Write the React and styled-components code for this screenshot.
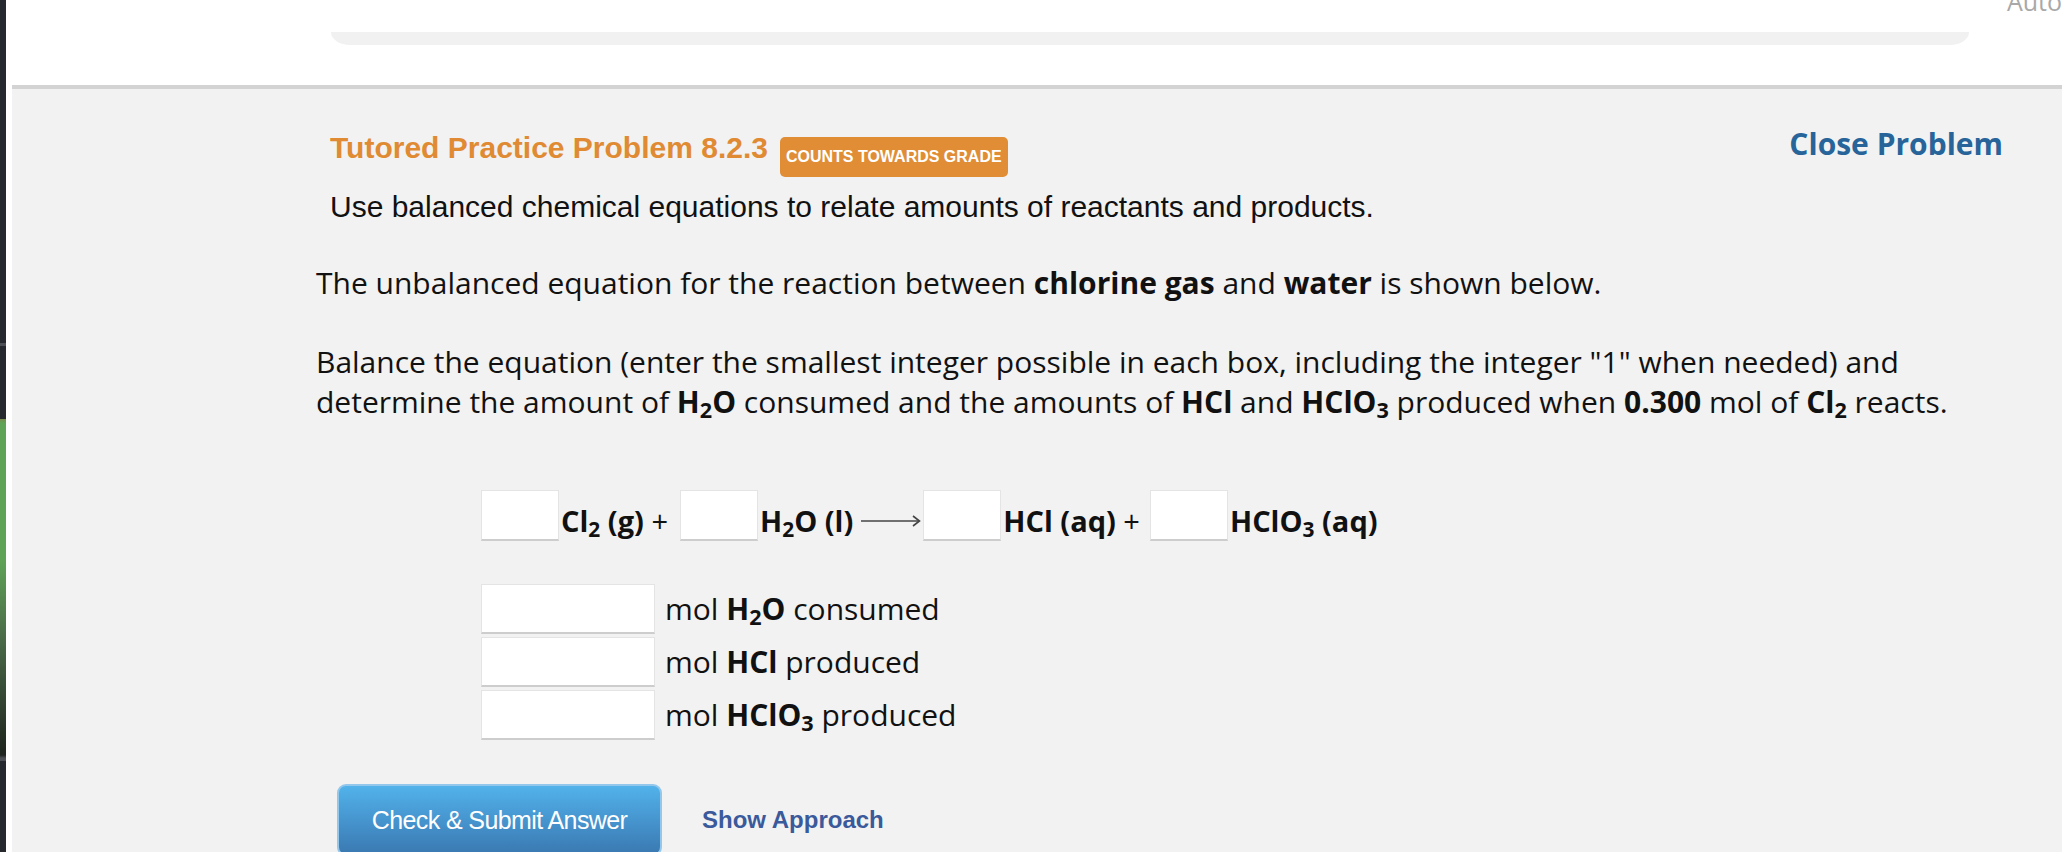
import React from "react";
import styled, { createGlobalStyle } from "styled-components";

const Global = createGlobalStyle`
  html, body { margin: 0; padding: 0; background: #ffffff; }
  body { font-family: "Open Sans", "Liberation Sans", sans-serif; color: #111; }
  * { box-sizing: border-box; }
`;

const Page = styled.div`
  display: flex;
  height: 852px;
  overflow: hidden;
`;

const SideStrip = styled.div`
  width: 6px;
  flex: none;
  background: linear-gradient(
    to bottom,
    #25282d 0px,
    #25282d 343px,
    #4c4f54 343px,
    #4c4f54 346px,
    #25282d 346px,
    #25282d 419px,
    #7a8a4a 419px,
    #5ea356 423px,
    #5fa357 560px,
    #4a6a48 640px,
    #1e241e 755px,
    #4c4f54 758px,
    #4c4f54 761px,
    #25282d 761px,
    #25282d 852px
  );
`;

const Main = styled.div`
  flex: 1;
  display: flex;
  flex-direction: column;
  background: #ffffff;
  min-width: 0;
`;

const TopBar = styled.div`
  height: 85px;
  display: flex;
  align-items: flex-start;
  flex: none;
`;

const Tab = styled.div`
  margin-left: 325px;
  margin-top: 32px;
  width: 1653px;
  height: 13px;
  background: #f1f1f1;
  border-radius: 0 0 19px 19px / 0 0 13px 13px;
`;

const AutoLabel = styled.span`
  margin-left: 38px;
  margin-top: -11px;
  font-family: "Open Sans", sans-serif;
  font-size: 25px;
  line-height: 24px;
  color: #a8a8a8;
  white-space: nowrap;
`;

const Divider = styled.div`
  height: 4px;
  flex: none;
  background: #d3d3d3;
  margin-left: 6px;
`;

const Panel = styled.div`
  flex: 1;
  margin-left: 6px;
  background: #f2f2f2;
  padding-top: 39px;
`;

const Header = styled.div`
  padding-left: 318px;
  padding-right: 59px;
`;

const TitleRow = styled.div`
  display: flex;
  align-items: flex-start;
`;

const Title = styled.h1`
  margin: 0;
  font-family: "Liberation Sans", Arial, sans-serif;
  font-weight: 700;
  font-size: 30px;
  line-height: 40px;
  color: #e08a33;
`;

const Badge = styled.span`
  margin-left: 12px;
  margin-top: 9px;
  height: 40px;
  padding: 0 6px;
  display: inline-flex;
  align-items: center;
  background: #e08d36;
  border-radius: 5px;
  color: #ffffff;
  font-family: "Liberation Sans", Arial, sans-serif;
  font-weight: 700;
  font-size: 16px;
`;

const CloseLink = styled.a`
  margin-left: auto;
  margin-top: -4px;
  font-family: "Open Sans", sans-serif;
  font-weight: 700;
  font-size: 30px;
  line-height: 40px;
  color: #27649a;
  text-decoration: none;
  cursor: pointer;
`;

const Subtitle = styled.p`
  margin: 10px 0 0;
  font-family: "Liberation Sans", Arial, sans-serif;
  font-size: 30px;
  line-height: 40px;
  color: #111;
`;

const Body = styled.div`
  padding-left: 304px;
  font-family: "Open Sans", sans-serif;
  font-size: 30px;
  line-height: 40px;
  color: #111;
`;

const Para = styled.p`
  margin: ${(p) => p.$top}px 0 0;
`;

const Sub = styled.sub`
  font-size: 0.72em;
  line-height: 0;
  vertical-align: -0.22em;
`;

const EquationRow = styled.div`
  margin: 68px 0 0 165px;
  display: flex;
  align-items: flex-end;
  font-size: 29px;
`;

const Box = styled.div`
  width: ${(p) => p.$w}px;
  height: ${(p) => p.$h}px;
  flex: none;
  background: #ffffff;
  border: 1px solid #e4e4e4;
  border-bottom: 2px solid #cdcdcd;
`;

const Term = styled.span`
  margin: 0 ${(p) => p.$after}px 0 2px;
  white-space: nowrap;
  font-weight: 700;
`;

const Plus = styled.span`
  font-weight: 400;
`;

const Arrow = styled.svg`
  margin: 0 2px 13px 8px;
  flex: none;
`;

const MolList = styled.div`
  margin: 43px 0 0 165px;
  display: flex;
  flex-direction: column;
  gap: 3px;
`;

const MolRow = styled.div`
  display: flex;
  align-items: center;
  gap: 10px;
`;

const Actions = styled.div`
  margin: 44px 0 0 325px;
  display: flex;
  align-items: center;
  gap: 40px;
`;

const SubmitButton = styled.button`
  width: 325px;
  height: 72px;
  border: 2px solid #93c7ec;
  border-radius: 9px;
  background: linear-gradient(to bottom, #52b2ea 0%, #4592cc 55%, #3a79b1 100%);
  color: #ffffff;
  font-family: "Liberation Sans", Arial, sans-serif;
  font-size: 25px;
  letter-spacing: -0.6px;
  padding: 0;
  cursor: pointer;
`;

const ApproachLink = styled.a`
  font-family: "Liberation Sans", Arial, sans-serif;
  font-weight: 700;
  font-size: 24px;
  color: #3a5a9c;
  text-decoration: none;
  cursor: pointer;
`;

function LongArrow() {
  return (
    <Arrow width="60" height="14" viewBox="0 0 60 14">
      <line x1="0" y1="7" x2="58" y2="7" stroke="#444" strokeWidth="1.6" />
      <path d="M52 2 L58.5 7 L52 12" fill="none" stroke="#444" strokeWidth="1.6" />
    </Arrow>
  );
}

export default function App() {
  return (
    <>
      <Global />
      <Page>
        <SideStrip />
        <Main>
          <TopBar>
            <Tab />
            <AutoLabel>Auto</AutoLabel>
          </TopBar>
          <Divider />
          <Panel>
            <Header>
              <TitleRow>
                <Title>Tutored Practice Problem 8.2.3</Title>
                <Badge>COUNTS TOWARDS GRADE</Badge>
                <CloseLink>Close Problem</CloseLink>
              </TitleRow>
              <Subtitle>
                Use balanced chemical equations to relate amounts of reactants and products.
              </Subtitle>
            </Header>
            <Body>
              <Para $top={36}>
                The unbalanced equation for the reaction between <b>chlorine gas</b> and{" "}
                <b>water</b> is shown below.
              </Para>
              <Para $top={39}>
                Balance the equation (enter the smallest integer possible in each box, including
                the integer "1" when needed) and
                <br />
                determine the amount of{" "}
                <b>
                  H<Sub>2</Sub>O
                </b>{" "}
                consumed and the amounts of <b>HCl</b> and{" "}
                <b>
                  HClO<Sub>3</Sub>
                </b>{" "}
                produced when <b>0.300</b> mol of{" "}
                <b>
                  Cl<Sub>2</Sub>
                </b>{" "}
                reacts.
              </Para>
              <EquationRow>
                <Box $w={78} $h={51} />
                <Term $after={12}>
                  Cl<Sub>2</Sub> (g) <Plus>+</Plus>
                </Term>
                <Box $w={78} $h={51} />
                <Term $after={0}>
                  H<Sub>2</Sub>O (l)
                </Term>
                <LongArrow />
                <Box $w={78} $h={51} />
                <Term $after={10}>
                  HCl (aq) <Plus>+</Plus>
                </Term>
                <Box $w={78} $h={51} />
                <Term $after={0}>
                  HClO<Sub>3</Sub> (aq)
                </Term>
              </EquationRow>
              <MolList>
                <MolRow>
                  <Box $w={174} $h={50} />
                  <span>
                    mol{" "}
                    <b>
                      H<Sub>2</Sub>O
                    </b>{" "}
                    consumed
                  </span>
                </MolRow>
                <MolRow>
                  <Box $w={174} $h={50} />
                  <span>
                    mol <b>HCl</b> produced
                  </span>
                </MolRow>
                <MolRow>
                  <Box $w={174} $h={50} />
                  <span>
                    mol{" "}
                    <b>
                      HClO<Sub>3</Sub>
                    </b>{" "}
                    produced
                  </span>
                </MolRow>
              </MolList>
            </Body>
            <Actions>
              <SubmitButton>Check &amp; Submit Answer</SubmitButton>
              <ApproachLink>Show Approach</ApproachLink>
            </Actions>
          </Panel>
        </Main>
      </Page>
    </>
  );
}
